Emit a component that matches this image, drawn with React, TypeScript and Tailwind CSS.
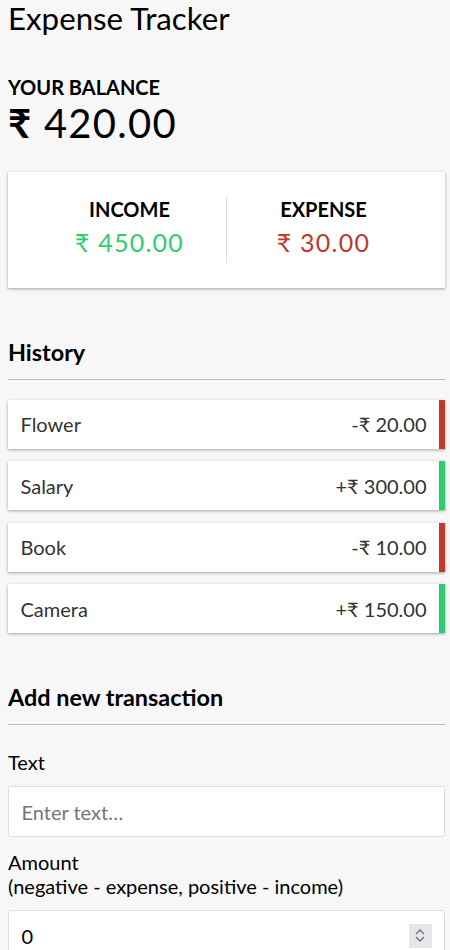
import React from "react";

const items = [
  { text: "Flower", amount: "-₹ 20.00", plus: false },
  { text: "Salary", amount: "+₹ 300.00", plus: true },
  { text: "Book", amount: "-₹ 10.00", plus: false },
  { text: "Camera", amount: "+₹ 150.00", plus: true },
];

const shadow =
  "shadow-[0_1.25px_3.75px_rgba(0,0,0,0.12),0_1.25px_2.5px_rgba(0,0,0,0.24)]";

export default function App() {
  return (
    <div
      className="min-h-screen bg-[#f7f7f7] text-black"
      style={{ fontFamily: "Lato, 'Open Sans', sans-serif" }}
    >
      <div className="ml-[8px] w-[437px]">
        <h2 className="m-0 text-[31.25px] leading-[1.2] font-normal">Expense Tracker</h2>

        <div className="mt-[37px]">
          <h4 className="m-0 text-[20px] leading-[1.2] font-bold uppercase">Your Balance</h4>
          <h1 className="m-0 text-[40px] leading-[1.2] font-normal tracking-[1.25px]">
            <span className="font-bold">₹</span> 420.00
          </h1>
        </div>

        <div className={`my-[25px] flex bg-white p-[25px] ${shadow}`}>
          <div className="flex-1 border-r border-[#dedede] text-center">
            <h4 className="m-0 text-[20px] leading-[1.2] font-bold uppercase">Income</h4>
            <p className="my-[6.25px] text-[25px] leading-[1.2] tracking-[1.25px] text-[#2ecc71]">₹ 450.00</p>
          </div>
          <div className="flex-1 text-center">
            <h4 className="m-0 text-[20px] leading-[1.2] font-bold uppercase">Expense</h4>
            <p className="my-[6.25px] text-[25px] leading-[1.2] tracking-[1.25px] text-[#c0392b]">₹ 30.00</p>
          </div>
        </div>

        <h3 className="mt-[50px] mb-0 border-b border-[#bbb] pb-[12.5px] text-[23.4px] leading-[1.2] font-bold">
          History
        </h3>
        <ul className="mt-[20px] mb-[50px] flex flex-col gap-[12.5px] p-0">
          {items.map((it) => (
            <li
              key={it.text}
              className={`flex justify-between bg-white p-[12.5px] text-[20px] leading-[1.2] text-[#333] border-r-[6.25px] ${
                it.plus ? "border-[#2ecc71]" : "border-[#c0392b]"
              } ${shadow}`}
            >
              <span>{it.text}</span>
              <span>{it.amount}</span>
            </li>
          ))}
        </ul>

        <h3 className="mt-0 mb-[12.5px] border-b border-[#bbb] pb-[12.5px] text-[23.4px] leading-[1.2] font-bold">
          Add new transaction
        </h3>
        <form>
          <div>
            <label className="my-[12.5px] inline-block text-[20px] leading-[1.2]">Text</label>
            <input
              type="text"
              placeholder="Enter text…"
              className="block w-full rounded-[2.5px] border border-[#dedede] bg-white p-[12.5px] text-[20px] leading-[1.2] placeholder:text-[#757575]"
            />
          </div>
          <div>
            <label className="my-[12.5px] inline-block text-[20px] leading-[1.2]">
              Amount <br />
              (negative - expense, positive - income)
            </label>
            <div className="relative">
              <input
                type="number"
                defaultValue={0}
                className="block w-full rounded-[2.5px] border border-[#dedede] bg-white p-[12.5px] text-[20px] leading-[1.2] [appearance:textfield] [&::-webkit-inner-spin-button]:appearance-none [&::-webkit-outer-spin-button]:appearance-none"
              />
              <div className="pointer-events-none absolute right-[13.5px] top-[13.5px] flex h-[24px] w-[23px] flex-col items-center justify-center gap-[1px] bg-[#e6e6ea]">
                <svg width="10" height="6" viewBox="0 0 10 6" fill="none" stroke="#70707a" strokeWidth="1.4">
                  <path d="M1 5 L5 1 L9 5" />
                </svg>
                <svg width="10" height="6" viewBox="0 0 10 6" fill="none" stroke="#70707a" strokeWidth="1.4">
                  <path d="M1 1 L5 5 L9 1" />
                </svg>
              </div>
            </div>
          </div>
        </form>
      </div>
    </div>
  );
}
